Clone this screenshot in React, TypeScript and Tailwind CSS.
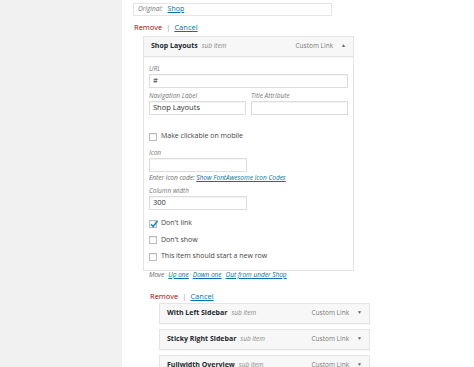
import React from "react";

function Field({ label, value = "", width = "w-[98px]" }: { label: string; value?: string; width?: string }) {
  return (
    <div className={`flex flex-col ${width}`}>
      <span className="h-[8px] text-[6.5px] leading-[8px] italic text-[#777]">{label}</span>
      <div className="mt-[1px] flex h-[14px] items-center border border-[#ddd] px-[3px] text-[7.5px] text-[#333] shadow-[inset_0_1px_1px_rgba(0,0,0,0.05)]">
        {value}
      </div>
    </div>
  );
}

function Check({ label, checked = false }: { label: string; checked?: boolean }) {
  return (
    <div className="flex h-[10px] items-center gap-[4px]">
      <span className="relative flex h-[8px] w-[8px] items-center justify-center border border-[#bbb] bg-white shadow-[inset_0_1px_1px_rgba(0,0,0,0.08)]">
        {checked && (
          <svg viewBox="0 0 10 10" className="absolute -left-[1px] -top-[2px] h-[10px] w-[10px]">
            <path d="M2 5.2 L4.2 7.6 L8.6 1.8" fill="none" stroke="#1e8cbe" strokeWidth="1.6" />
          </svg>
        )}
      </span>
      <span className="text-[7px] text-[#444]">{label}</span>
    </div>
  );
}

function ItemBar({ title, open = false }: { title: string; open?: boolean }) {
  return (
    <div className="flex h-[21px] w-[211px] items-center border border-[#e5e5e5] bg-[#f7f7f7] pl-[7px] pr-[7px] shadow-[0_1px_1px_rgba(0,0,0,0.04)]">
      <span className="text-[7px] font-bold text-[#23282d]">{title}</span>
      <span className="ml-[4px] text-[6.5px] italic text-[#888]">sub item</span>
      <span className="ml-auto text-[6.5px] text-[#777]">Custom Link</span>
      <span className="ml-[8px] text-[5px] text-[#666]">{open ? "▲" : "▼"}</span>
    </div>
  );
}

function Actions() {
  return (
    <div className="flex h-[12px] items-center text-[7.5px]">
      <span className="text-[#a00]">Remove</span>
      <span className="mx-[4px] text-[#999]">|</span>
      <span className="text-[#0073aa] underline">Cancel</span>
    </div>
  );
}

export default function App() {
  return (
    <div className="flex h-[367px] w-[474px] overflow-hidden bg-white font-['Open_Sans',sans-serif]">
      <div className="w-[122px] shrink-0 bg-[#f1f1f1]" />
      <div className="flex flex-col pl-[11px] pt-[3px]">
        <div className="flex h-[14px] w-[199px] items-center gap-[5px] border border-[#e5e5e5] px-[4px]">
          <span className="text-[6.5px] italic text-[#777]">Original:</span>
          <span className="text-[7px] text-[#0073aa] underline">Shop</span>
        </div>

        <div className="mt-[6px] pl-[1px]">
          <Actions />
        </div>

        <div className="ml-[10px] mt-[2px]">
          <ItemBar title="Shop Layouts" open />
          <div className="flex h-[214px] w-[211px] flex-col border border-t-0 border-[#e5e5e5] px-[5px] pt-[8px]">
            <Field label="URL" value="#" width="w-[199px]" />
            <div className="mt-[4px] flex gap-[5px]">
              <Field label="Navigation Label" value="Shop Layouts" />
              <Field label="Title Attribute" />
            </div>
            <div className="mt-[17px]">
              <Check label="Make clickable on mobile" />
            </div>
            <div className="mt-[7px]">
              <Field label="Icon" />
            </div>
            <span className="mt-[1px] h-[9px] text-[6.5px] leading-[9px] italic text-[#666]">
              Enter icon code: <span className="text-[#0073aa] underline">Show FontAwesome Icon Codes</span>
            </span>
            <div className="mt-[5px]">
              <Field label="Column width" value="300" />
            </div>
            <div className="mt-[9px] flex flex-col gap-[6.5px]">
              <Check label="Don't link" checked />
              <Check label="Don't show" />
              <Check label="This item should start a new row" />
            </div>
          </div>
          <div className="flex h-[8px] items-center gap-[4px] pl-[6px] text-[6.5px] italic">
            <span className="text-[#666]">Move</span>
            <span className="text-[#0073aa] underline">Up one</span>
            <span className="text-[#0073aa] underline">Down one</span>
            <span className="text-[#0073aa] underline">Out from under Shop</span>
          </div>
        </div>

        <div className="ml-[17px] mt-[12px]">
          <Actions />
        </div>
        <div className="ml-[26px] flex flex-col gap-[5px]">
          <ItemBar title="With Left Sidebar" />
          <ItemBar title="Sticky Right Sidebar" />
          <ItemBar title="Fullwidth Overview" />
        </div>
      </div>
    </div>
  );
}
